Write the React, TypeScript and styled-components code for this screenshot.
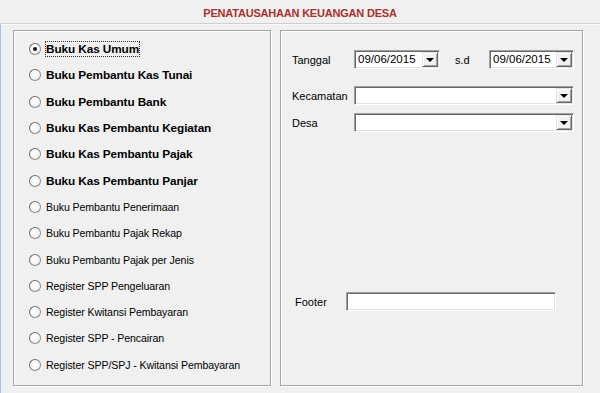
import React, { useState } from 'react'
import styled, { createGlobalStyle } from 'styled-components'

const GlobalStyle = createGlobalStyle`
  html, body {
    margin: 0;
    padding: 0;
    background: #f0f0f0;
  }
  * { box-sizing: border-box; }
`

const reports = [
  { label: 'Buku Kas Umum', bold: true },
  { label: 'Buku Pembantu Kas Tunai', bold: true },
  { label: 'Buku Pembantu Bank', bold: true },
  { label: 'Buku Kas Pembantu Kegiatan', bold: true },
  { label: 'Buku Kas Pembantu Pajak', bold: true },
  { label: 'Buku Kas Pembantu Panjar', bold: true },
  { label: 'Buku Pembantu Penerimaan', bold: false },
  { label: 'Buku Pembantu Pajak Rekap', bold: false },
  { label: 'Buku Pembantu Pajak per Jenis', bold: false },
  { label: 'Register SPP Pengeluaran', bold: false },
  { label: 'Register Kwitansi Pembayaran', bold: false },
  { label: 'Register SPP - Pencairan', bold: false },
  { label: 'Register SPP/SPJ - Kwitansi Pembayaran', bold: false },
]

const App: React.FC = () => {
  const [selected, setSelected] = useState(0)

  return (
    <>
      <GlobalStyle />
      <Window>
        <Header>
          <Title>PENATAUSAHAAN KEUANGAN DESA</Title>
        </Header>
        <Body>
          <Panel width={258}>
            <RadioList>
              {reports.map((r, i) => (
                <RadioRow key={r.label} onClick={() => setSelected(i)}>
                  <RadioCircle checked={selected === i} />
                  <RadioLabel bold={r.bold} focused={selected === i}>
                    {r.label}
                  </RadioLabel>
                </RadioRow>
              ))}
            </RadioList>
          </Panel>
          <Panel width={303}>
            <Form>
              <FieldRow gap={17}>
                <Label>Tanggal</Label>
                <Combo width={86}>
                  <ComboText>09/06/2015</ComboText>
                  <DropButton><Arrow /></DropButton>
                </Combo>
                <Sd>s.d</Sd>
                <Combo width={85}>
                  <ComboText>09/06/2015</ComboText>
                  <DropButton><Arrow /></DropButton>
                </Combo>
              </FieldRow>
              <FieldRow gap={8}>
                <Label>Kecamatan</Label>
                <Combo width={220}>
                  <ComboText />
                  <DropButton><Arrow /></DropButton>
                </Combo>
              </FieldRow>
              <FieldRow>
                <Label>Desa</Label>
                <Combo width={220}>
                  <ComboText />
                  <DropButton><Arrow /></DropButton>
                </Combo>
              </FieldRow>
              <FooterRow>
                <FooterLabel>Footer</FooterLabel>
                <TextBox />
              </FooterRow>
            </Form>
          </Panel>
        </Body>
      </Window>
    </>
  )
}

export default App

const Window = styled.div`
  width: 600px;
  height: 393px;
  background: #f0f0f0;
  display: flex;
  flex-direction: column;
  font-family: "Liberation Sans", Arial, sans-serif;
  overflow: hidden;
`

const Header = styled.div`
  height: 24px;
  display: flex;
  align-items: center;
  justify-content: center;
  border-bottom: 1px solid #cfcfcf;
  box-shadow: 0 1px 0 #fafafa;
  padding-top: 2px;
`

const Title = styled.div`
  color: #a8322d;
  font-weight: bold;
  font-size: 11px;
  letter-spacing: -0.2px;
`

const Body = styled.div`
  flex: 1;
  display: flex;
  gap: 9px;
  padding: 6px 0 7px 12px;
  border-left: 1px solid #a9c2de;
`

const Panel = styled.div<{ width: number }>`
  width: ${(p) => p.width}px;
  height: 356px;
  border: 1px solid #a6a6a6;
  box-shadow: 1px 1px 0 #ffffff, inset 1px 1px 0 #ffffff;
`

const RadioList = styled.div`
  display: flex;
  flex-direction: column;
  padding: 5px 0 0 16px;
`

const RadioRow = styled.div`
  height: 26.3px;
  display: flex;
  align-items: center;
  gap: 4px;
  cursor: default;
`

const RadioCircle = styled.span<{ checked: boolean }>`
  width: 12px;
  height: 12px;
  margin-left: -1px;
  border-radius: 50%;
  border: 1px solid #8e8f8f;
  border-left-color: #707070;
  border-top-color: #707070;
  background: radial-gradient(circle at 40% 40%, #ffffff 0%, #f4f4f4 60%, #dcdcdc 100%);
  display: flex;
  align-items: center;
  justify-content: center;
  flex-shrink: 0;
  &::after {
    content: '';
    width: 4px;
    height: 4px;
    border-radius: 50%;
    background: #1a1a1a;
    display: ${(p) => (p.checked ? 'block' : 'none')};
  }
`

const RadioLabel = styled.span<{ bold: boolean; focused: boolean }>`
  font-size: ${(p) => (p.bold ? '11.8px' : '10.6px')};
  font-weight: ${(p) => (p.bold ? 'bold' : 'normal')};
  color: #000;
  white-space: nowrap;
  padding: 1px 1px;
  outline: ${(p) => (p.focused ? '1px dotted #333' : 'none')};
  outline-offset: -1px;
  letter-spacing: -0.1px;
`

const Form = styled.div`
  display: flex;
  flex-direction: column;
  padding: 19px 0 0 11px;
`

const FieldRow = styled.div<{ gap?: number }>`
  display: flex;
  align-items: center;
  height: 19px;
  margin-bottom: ${(p) => p.gap ?? 0}px;
`

const Label = styled.span`
  width: 62px;
  font-size: 11px;
  color: #000;
`

const Sd = styled.span`
  font-size: 11px;
  width: 49px;
  padding-left: 15px;
`

const Combo = styled.div<{ width: number }>`
  width: ${(p) => p.width}px;
  height: 19px;
  display: flex;
  align-items: stretch;
  background: #ffffff;
  border-top: 1px solid #a0a0a0;
  border-left: 1px solid #a0a0a0;
  border-right: 1px solid #ffffff;
  border-bottom: 1px solid #ffffff;
  box-shadow: inset 1px 1px 0 #696969, inset -1px -1px 0 #e3e3e3;
  padding: 1px;
`

const ComboText = styled.span`
  flex: 1;
  font-size: 11.5px;
  line-height: 15px;
  padding-left: 2px;
  color: #000;
`

const DropButton = styled.span`
  width: 16px;
  background: #f0f0f0;
  border-top: 1px solid #e3e3e3;
  border-left: 1px solid #e3e3e3;
  border-right: 1px solid #696969;
  border-bottom: 1px solid #696969;
  box-shadow: inset 1px 1px 0 #ffffff, inset -1px -1px 0 #a0a0a0;
  display: flex;
  align-items: center;
  justify-content: center;
`

const Arrow = styled.span`
  width: 0;
  height: 0;
  border-left: 4px solid transparent;
  border-right: 4px solid transparent;
  border-top: 4px solid #000;
  margin-top: 1px;
`

const FooterRow = styled.div`
  display: flex;
  align-items: center;
  margin-top: 160px;
  padding-left: 3px;
`

const FooterLabel = styled.span`
  width: 51px;
  font-size: 11px;
  color: #000;
`

const TextBox = styled.div`
  width: 210px;
  height: 19px;
  background: #ffffff;
  border-top: 1px solid #a0a0a0;
  border-left: 1px solid #a0a0a0;
  border-right: 1px solid #ffffff;
  border-bottom: 1px solid #ffffff;
  box-shadow: inset 1px 1px 0 #696969, inset -1px -1px 0 #e3e3e3;
`
